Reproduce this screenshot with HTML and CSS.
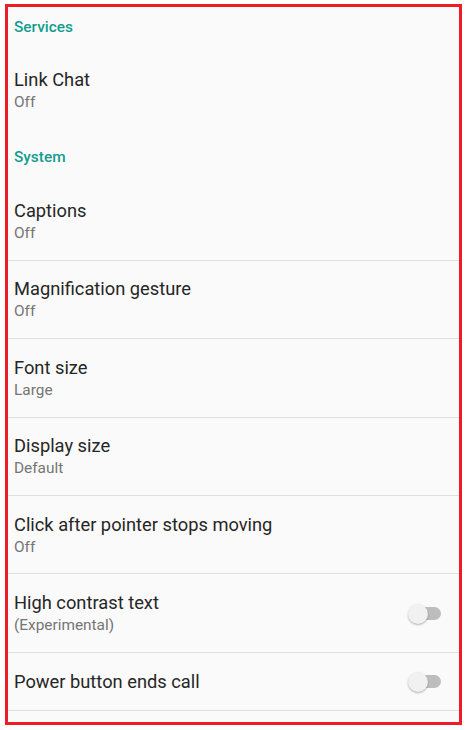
FILE: index.html
```html
<!DOCTYPE html>
<html>
<head>
<meta charset="utf-8">
<link rel="stylesheet" href="styles.css">
</head>
<body>
<div class="frame">
  <div class="category first">Services</div>
  <div class="pref">
    <div class="text">
      <div class="title">Link Chat</div>
      <div class="summary">Off</div>
    </div>
  </div>
  <div class="category">System</div>
  <div class="pref divided">
    <div class="text">
      <div class="title">Captions</div>
      <div class="summary">Off</div>
    </div>
  </div>
  <div class="pref divided">
    <div class="text">
      <div class="title">Magnification gesture</div>
      <div class="summary">Off</div>
    </div>
  </div>
  <div class="pref divided">
    <div class="text">
      <div class="title">Font size</div>
      <div class="summary">Large</div>
    </div>
  </div>
  <div class="pref divided">
    <div class="text">
      <div class="title">Display size</div>
      <div class="summary">Default</div>
    </div>
  </div>
  <div class="pref divided">
    <div class="text">
      <div class="title">Click after pointer stops moving</div>
      <div class="summary">Off</div>
    </div>
  </div>
  <div class="pref divided">
    <div class="text">
      <div class="title">High contrast text</div>
      <div class="summary">(Experimental)</div>
    </div>
    <div class="switch"><span class="track"></span><span class="thumb"></span></div>
  </div>
  <div class="pref divided single">
    <div class="text">
      <div class="title">Power button ends call</div>
    </div>
    <div class="switch"><span class="track"></span><span class="thumb"></span></div>
  </div>
</div>
</body>
</html>
```

FILE: styles.css
```css
html, body {
  margin: 0;
  padding: 0;
  background: #ffffff;
}
body {
  font-family: Roboto, "Noto Sans", "Liberation Sans", sans-serif;
}
.frame {
  box-sizing: border-box;
  width: 457px;
  height: 721px;
  margin: 4px 0 0 5px;
  border: 3px solid #ee1d25;
  background: #fafafa;
  overflow: hidden;
  display: flex;
  flex-direction: column;
}
.category {
  flex: none;
  padding: 18px 6px 14px 6px;
  font-size: 15.4px;
  line-height: 21px;
  font-weight: 500;
  color: #129d8f;
}
.category.first {
  padding-top: 10px;
  padding-bottom: 13px;
}
.pref {
  flex: none;
  box-sizing: border-box;
  height: 78.4px;
  padding: 1px 18px 0 6px;
  display: flex;
  align-items: center;
}
.pref.divided {
  border-bottom: 1px solid #e0e0e0;
}
.pref.single {
  height: 58px;
}
.text {
  flex: 1;
  min-width: 0;
}
.title {
  font-size: 18.3px;
  line-height: 23px;
  color: #262626;
}
.summary {
  font-size: 15.4px;
  line-height: 22px;
  color: #757575;
}
.switch {
  position: relative;
  flex: none;
  width: 33px;
  height: 20px;
}
.track {
  position: absolute;
  left: 3px;
  top: 3.5px;
  width: 30px;
  height: 13px;
  border-radius: 7px;
  background: #bdbdbd;
}
.thumb {
  position: absolute;
  left: 0;
  top: 0;
  width: 20px;
  height: 20px;
  border-radius: 50%;
  background: #f1f1f1;
  box-shadow: 0 1px 2px rgba(0, 0, 0, 0.3);
}
```
